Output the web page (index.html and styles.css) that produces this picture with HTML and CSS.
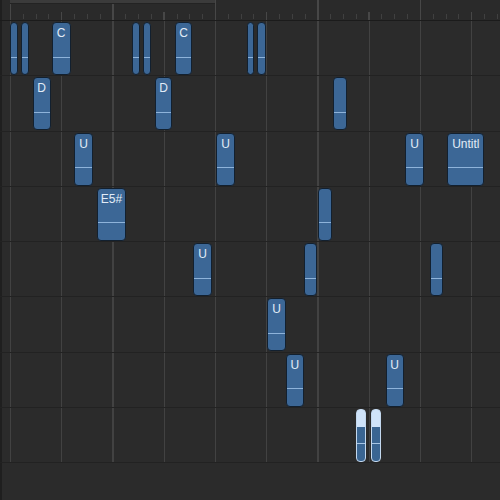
FILE: index.html
```html
<!DOCTYPE html>
<html>

<head>
	<title>Tracks</title>
	<meta charset="UTF-8">
	<link rel="stylesheet" href="styles.css">
</head>

<body>
	<div id="arrange">
		<div id="ruler">
			<div class="thumb"></div>
		</div>
		<div id="lanes">
			<div class="lane"></div>
			<div class="lane"></div>
			<div class="lane"></div>
			<div class="lane"></div>
			<div class="lane"></div>
			<div class="lane"></div>
			<div class="lane"></div>
			<div class="lane"></div>
		</div>
		<div id="footer"></div>
	</div>

	<script type="text/javascript">
		// [lane, left, width, name, selected]
		var regions = [
			[0, 10.3, 8], [0, 21.3, 8], [0, 51.7, 19, "C"], [0, 131.7, 8.3], [0, 142.7, 8],
			[0, 174.7, 17.7, "C"], [0, 246.7, 7.6], [0, 257.3, 8.4],
			[1, 32.7, 18, "D"], [1, 154.7, 17.7, "D"], [1, 333.3, 14],
			[2, 74.3, 18.7, "U"], [2, 216.3, 18.4, "U"], [2, 405, 19, "U"], [2, 447.3, 37, "Untitl"],
			[3, 97.3, 28.4, "E5#"], [3, 318.3, 13.4],
			[4, 193.3, 18.7, "U"], [4, 304, 12.7], [4, 429.7, 13],
			[5, 267.3, 18.7, "U"],
			[6, 286, 17.7, "U"], [6, 385.7, 18, "U"],
			[7, 356, 10, "", true], [7, 370.7, 10.3, "", true]
		];

		var lanes = document.querySelectorAll("#lanes .lane");
		for (var i = 0; i < regions.length; i++) {
			var r = regions[i];
			var el = document.createElement("div");
			el.className = r[4] ? "region selected" : "region";
			el.style.left = r[1] + "px";
			el.style.width = r[2] + "px";
			el.innerHTML = '<span class="name">' + (r[3] || "") + '</span><span class="level"></span>';
			lanes[r[0]].appendChild(el);
		}
	</script>
</body>

</html>
```

FILE: styles.css
```css
body {
	margin: 0;
	background: #2b2b2b;
	font-family: "Liberation Sans", Arial, sans-serif;
}

#arrange {
	width: 500px;
	height: 500px;
	display: flex;
	flex-direction: column;
	overflow: hidden;
}

#ruler {
	height: 21px;
	flex: none;
	box-sizing: border-box;
	padding-left: 10px;
	border-bottom: 1px solid #1b1b1b;
	background-color: #2a2a2a;
	background-image:
		linear-gradient(90deg, #1f1f1f 0 2px, transparent 2px),
		repeating-linear-gradient(90deg, #474747 0 1px, transparent 1px 102.5px),
		repeating-linear-gradient(90deg, #474747 0 1px, transparent 1px 102.5px),
		repeating-linear-gradient(90deg, #404040 0 1px, transparent 1px 12.81px);
	background-size: 100% 100%, 100% 20px, 100% 8px, 100% 5px;
	background-position: 0 0, 10px 0, 61.3px 12px, 10px 14px;
	background-repeat: no-repeat;
}

.thumb {
	width: 205px;
	height: 3px;
	background: #3b3b3b;
	border-bottom: 1px solid #232323;
}

#lanes {
	flex: none;
	display: flex;
	flex-direction: column;
	background-image:
		linear-gradient(90deg, #1f1f1f 0 2px, transparent 2px),
		repeating-linear-gradient(90deg, #424242 0 1px, transparent 1px 51.25px);
	background-position: 0 0, 10px 0;
	background-repeat: no-repeat;
}

.lane {
	position: relative;
	height: 55.25px;
	box-sizing: border-box;
	border-bottom: 1px solid #222;
}

#footer {
	flex: 1;
	background: linear-gradient(90deg, #1f1f1f 0 2px, #2b2b2b 2px);
}

.region {
	position: absolute;
	top: 1px;
	height: 53px;
	box-sizing: border-box;
	border: 1.5px solid #12202f;
	border-radius: 4px;
	background: #3c6796;
	overflow: hidden;
	text-align: center;
}

.region .name {
	display: block;
	padding-top: 3px;
	font-size: 12px;
	line-height: 14px;
	color: #e2ecf7;
	white-space: nowrap;
}

.region .level {
	position: absolute;
	left: 0;
	right: 0;
	top: 33.5px;
	height: 1px;
	background: #8eb3da;
}

.selected {
	border-color: #c3d8ee;
	background: linear-gradient(#cfe3f9 0 17px, #3a6592 17px);
}

.selected .level {
	background: #a7c5e4;
}
```
